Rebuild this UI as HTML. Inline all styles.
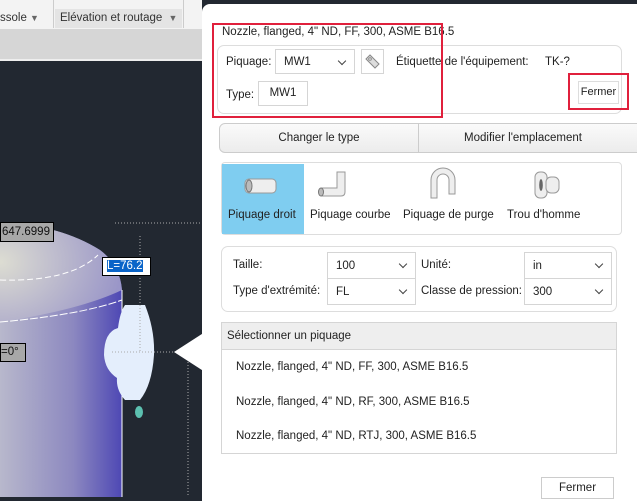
<!DOCTYPE html>
<html><head><meta charset="utf-8"><style>
*{margin:0;padding:0;box-sizing:border-box}
body{width:637px;height:497px;overflow:hidden;position:relative;font-family:"Liberation Sans",sans-serif;font-size:11.5px;color:#222;background:#222831}
.a{position:absolute}
.sel{position:absolute;border:1px solid #d5d5d5;background:#fff;padding-left:8px;line-height:24px;font-size:11.5px}
.sel:after{content:"";position:absolute;right:9px;top:8px;width:5px;height:5px;border-right:1.2px solid #444;border-bottom:1.2px solid #444;transform:rotate(45deg)}
.red{position:absolute;border:2px solid #e0203c}
</style></head><body>
<div class="a" style="left:0;top:0;width:202px;height:30px;background:#f3f3f3"></div>
<div class="a" style="left:53px;top:0;width:1px;height:28px;background:#ccc"></div>
<div class="a" style="left:183px;top:0;width:1px;height:28px;background:#ccc"></div>
<div class="a" style="left:0;top:12px;color:#333">ssole <span style="font-size:9px;color:#666">▼</span></div>
<div class="a" style="left:55px;top:9px;width:127px;height:19px;background:#e4e4e4"></div>
<div class="a" style="left:60px;top:12px;color:#333">Elévation et routage <span style="font-size:9px;color:#666;margin-left:3px">▼</span></div>
<div class="a" style="left:0;top:29px;width:202px;height:30px;background:#d6d6d6"></div>
<div class="a" style="left:0;top:59px;width:202px;height:2px;background:#eee"></div>
<svg class="a" style="left:0;top:0" width="210" height="497">
<defs><linearGradient id="g" x1="0" x2="1"><stop offset="0" stop-color="#b8b8cc"/><stop offset="0.6" stop-color="#8c88c0"/><stop offset="1" stop-color="#4e48b4"/></linearGradient>
<radialGradient id="t" cx="0" cy="0.4" r="1"><stop offset="0" stop-color="#ddddd2"/><stop offset="1" stop-color="#9a96c8"/></radialGradient></defs>
<path d="M0 222 Q60 225 100 250 Q120 265 122 290 L122 497 L0 497Z" fill="url(#g)"/>
<path d="M0 222 Q60 225 100 250 Q120 265 122 290 Q80 310 0 322Z" fill="url(#t)"/>
<path d="M0 280 Q70 282 98 255" stroke="#fff" fill="none" stroke-dasharray="6 3"/>
<path d="M0 322 Q80 315 122 300" stroke="#fff" fill="none" stroke-dasharray="8 2"/>
<line x1="122" y1="290" x2="122" y2="497" stroke="#fff"/>
<path d="M125 305 L145 305 Q155 330 154 355 Q152 385 140 400 L125 400 Q116 390 117 378 Q105 370 104 355 Q104 332 118 328 Q120 312 125 305Z" fill="#e4eefc"/>
<path d="M115 223 L205 223 M140 236 L140 352 M112 352 L175 352 M188 362 L188 497" stroke="#aaa" stroke-dasharray="1 2"/>
<path d="M174 352 L205 332 L205 372Z" fill="#fff"/>
<ellipse cx="139" cy="412" rx="4" ry="6" fill="#5cc0b0"/>
</svg>
<div class="a" style="left:0;top:222px;width:54px;height:20px;background:#a8a8a8;border:1px solid #000;font-size:11.5px;line-height:18px;padding-left:1px;color:#111">647.6999</div>
<div class="a" style="left:102px;top:257px;width:49px;height:19px;background:#fff;border:1px solid #000;padding:2px 0 0 4px"><span style="background:#0a64c8;color:#fff;font-size:11.5px">L=76.2</span></div>
<div class="a" style="left:0;top:343px;width:26px;height:19px;background:#a8a8a8;border:1px solid #000;font-size:11.5px;line-height:17px;color:#111">=0°</div>

<div class="a" style="left:202px;top:4px;width:440px;height:497px;background:#fff;border-radius:8px 0 0 0"></div>
<div class="a" style="left:222px;top:26px">Nozzle, flanged, 4" ND, FF, 300, ASME B16.5</div>
<div class="a" style="left:217px;top:45px;width:405px;height:69px;border:1px solid #ddd;border-radius:7px"></div>
<div class="a" style="left:226px;top:56px">Piquage:</div>
<div class="sel" style="left:275px;top:49px;width:80px;height:25px">MW1</div>
<div class="a" style="left:361px;top:49px;width:23px;height:25px;border:1px solid #d5d5d5"></div>
<svg class="a" style="left:364px;top:53px" width="18" height="18"><path d="M2 6 L6 2 L15 11 L11 15 Z" fill="#ddd" stroke="#888"/><circle cx="6" cy="6" r="1.3" fill="#fff" stroke="#888"/></svg>
<div class="a" style="left:396px;top:56px">Étiquette de l'équipement:</div>
<div class="a" style="left:545px;top:56px">TK-?</div>
<div class="a" style="left:226px;top:89px">Type:</div>
<div class="a" style="left:258px;top:81px;width:50px;height:25px;border:1px solid #d5d5d5;text-align:center;line-height:23px">MW1</div>
<div class="a" style="left:578px;top:81px;width:41px;height:23px;border:1px solid #ddd;text-align:center;line-height:21px;font-size:11px">Fermer</div>
<div class="red" style="left:212px;top:23px;width:231px;height:95px"></div>
<div class="red" style="left:568px;top:73px;width:61px;height:37px"></div>

<div class="a" style="left:219px;top:123px;width:200px;height:30px;border:1px solid #ccc;border-radius:6px 0 0 6px;background:linear-gradient(#fafafa,#ececec);text-align:center;line-height:28px">Changer le type</div>
<div class="a" style="left:418px;top:123px;width:222px;height:30px;border:1px solid #ccc;background:linear-gradient(#fafafa,#ececec);text-align:center;line-height:28px;padding-right:12px">Modifier l'emplacement</div>

<div class="a" style="left:221px;top:162px;width:401px;height:73px;border:1px solid #ddd;border-radius:4px"></div>
<div class="a" style="left:222px;top:164px;width:82px;height:70px;background:#7fcdf0"></div>
<svg class="a" style="left:222px;top:164px" width="400" height="40">
<rect x="23" y="15" width="31" height="14" rx="4" fill="#eee" stroke="#999"/><ellipse cx="27" cy="22" rx="3" ry="6" fill="#bbb" stroke="#777"/>
<path d="M115 8 h8 v20 q0 4 -4 4 h-20 v-8 h16z" fill="#eee" stroke="#999"/><ellipse cx="99" cy="28" rx="2.5" ry="4" fill="#bbb" stroke="#777"/>
<path d="M209 34 v-18 a12 12 0 0 1 24 0 v14 h-6 v-14 a6 6 0 0 0 -12 0 v18z" fill="#eee" stroke="#999"/>
<rect x="313" y="8" width="12" height="26" rx="5" fill="#eee" stroke="#999"/><rect x="324" y="13" width="13" height="16" rx="5" fill="#eee" stroke="#999"/><ellipse cx="319" cy="21" rx="1.8" ry="6" fill="#666"/>
</svg>
<div class="a" style="left:228px;top:209px">Piquage droit</div>
<div class="a" style="left:310px;top:209px">Piquage courbe</div>
<div class="a" style="left:403px;top:209px">Piquage de purge</div>
<div class="a" style="left:507px;top:209px">Trou d'homme</div>

<div class="a" style="left:221px;top:246px;width:396px;height:66px;border:1px solid #ddd;border-radius:7px"></div>
<div class="a" style="left:233px;top:259px">Taille:</div>
<div class="a" style="left:233px;top:285px">Type d'extrémité:</div>
<div class="a" style="left:421px;top:259px">Unité:</div>
<div class="a" style="left:421px;top:285px">Classe de pression:</div>
<div class="sel" style="left:327px;top:252px;width:89px;height:27px;line-height:26px">100</div>
<div class="sel" style="left:327px;top:278px;width:89px;height:27px;line-height:26px">FL</div>
<div class="sel" style="left:524px;top:252px;width:88px;height:27px;line-height:26px">in</div>
<div class="sel" style="left:524px;top:278px;width:88px;height:27px;line-height:26px">300</div>

<div class="a" style="left:221px;top:322px;width:396px;height:132px;border:1px solid #d5d5d5"></div>
<div class="a" style="left:222px;top:323px;width:394px;height:27px;background:#eee;border-bottom:1px solid #d5d5d5;padding-left:5px;line-height:26px">Sélectionner un piquage</div>
<div class="a" style="left:236px;top:361px">Nozzle, flanged, 4" ND, FF, 300, ASME B16.5</div>
<div class="a" style="left:236px;top:396px">Nozzle, flanged, 4" ND, RF, 300, ASME B16.5</div>
<div class="a" style="left:236px;top:430px">Nozzle, flanged, 4" ND, RTJ, 300, ASME B16.5</div>
<div class="a" style="left:541px;top:477px;width:73px;height:22px;border:1px solid #ccc;text-align:center;line-height:20px">Fermer</div>
</body></html>
